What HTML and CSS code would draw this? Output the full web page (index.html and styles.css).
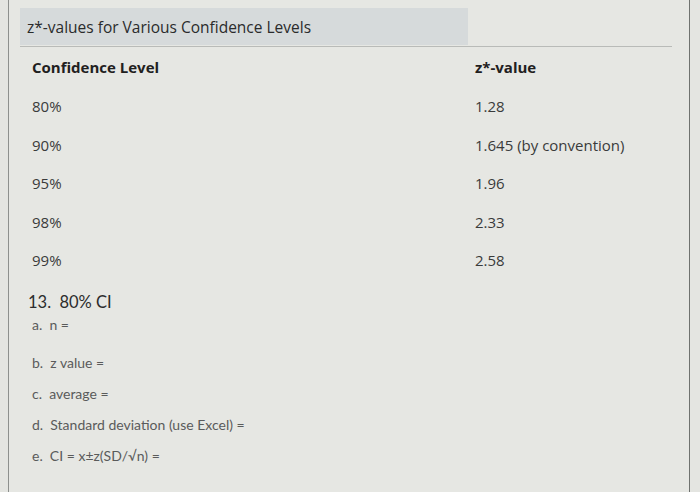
FILE: index.html
```html
<!DOCTYPE html>
<html>
<head>
<meta charset="utf-8">
<link rel="stylesheet" href="styles.css">
</head>
<body>
<div class="screen">
  <div class="page">
    <div class="caption">z*-values for Various Confidence Levels</div>
    <div class="table">
      <div class="row head"><div class="c1">Confidence Level</div><div class="c2">z*-value</div></div>
      <div class="row"><div class="c1">80%</div><div class="c2">1.28</div></div>
      <div class="row"><div class="c1">90%</div><div class="c2">1.645 (by convention)</div></div>
      <div class="row"><div class="c1">95%</div><div class="c2">1.96</div></div>
      <div class="row"><div class="c1">98%</div><div class="c2">2.33</div></div>
      <div class="row"><div class="c1">99%</div><div class="c2">2.58</div></div>
    </div>
    <div class="question">13.&nbsp;&nbsp;80% CI</div>
    <ol class="parts">
      <li class="first">a.&nbsp;&nbsp;n =</li>
      <li>b.&nbsp;&nbsp;z value =</li>
      <li>c.&nbsp;&nbsp;average =</li>
      <li>d.&nbsp;&nbsp;Standard deviation (use Excel) =</li>
      <li>e.&nbsp;&nbsp;CI = x±z(SD/√n) =</li>
    </ol>
  </div>
</div>
</body>
</html>
```
FILE: styles.css
```css
html, body {
  margin: 0;
  padding: 0;
  background: #e3e4e0;
}
.screen {
  width: 700px;
  height: 492px;
  overflow: hidden;
  background: #e4e5e1;
  display: flex;
}
.page {
  margin-left: 8px;
  width: 682px;
  height: 492px;
  border-left: 1px solid #8d908d;
  border-right: 1px solid #6f726f;
  box-sizing: border-box;
  padding: 8px 0 0 11px;
  background: #e6e7e3;
}
.caption {
  width: 448px;
  height: 37px;
  box-sizing: border-box;
  background: #d6dadb;
  padding: 10px 0 0 7px;
  font-family: "Open Sans", sans-serif;
  font-size: 15.5px;
  color: #2a2b2b;
  line-height: 18px;
}
.table {
  width: 652px;
  border-top: 1px solid #b9bbb8;
  margin-top: 1px;
  font-family: "Open Sans", sans-serif;
  color: #3a3b3b;
}
.row {
  display: flex;
  height: 38.5px;
  align-items: center;
  font-size: 15px;
}
.row.head {
  height: 40px;
  font-weight: 700;
  font-size: 15px;
  color: #1f2020;
}
.c1 {
  width: 455px;
  box-sizing: border-box;
  padding-left: 12px;
}
.c2 {
  flex: 1;
}
.question {
  margin-top: 12px;
  padding-left: 8px;
  font-family: Lato, sans-serif;
  font-size: 16.5px;
  color: #2c2d2d;
}
.parts {
  list-style: none;
  margin: 5px 0 0 0;
  padding: 0 0 0 12px;
  font-family: Lato, sans-serif;
  font-size: 14px;
  color: #5a5b5b;
}
.parts li {
  height: 31px;
  line-height: 16px;
}
.parts li.first {
  height: 38px;
}
```
